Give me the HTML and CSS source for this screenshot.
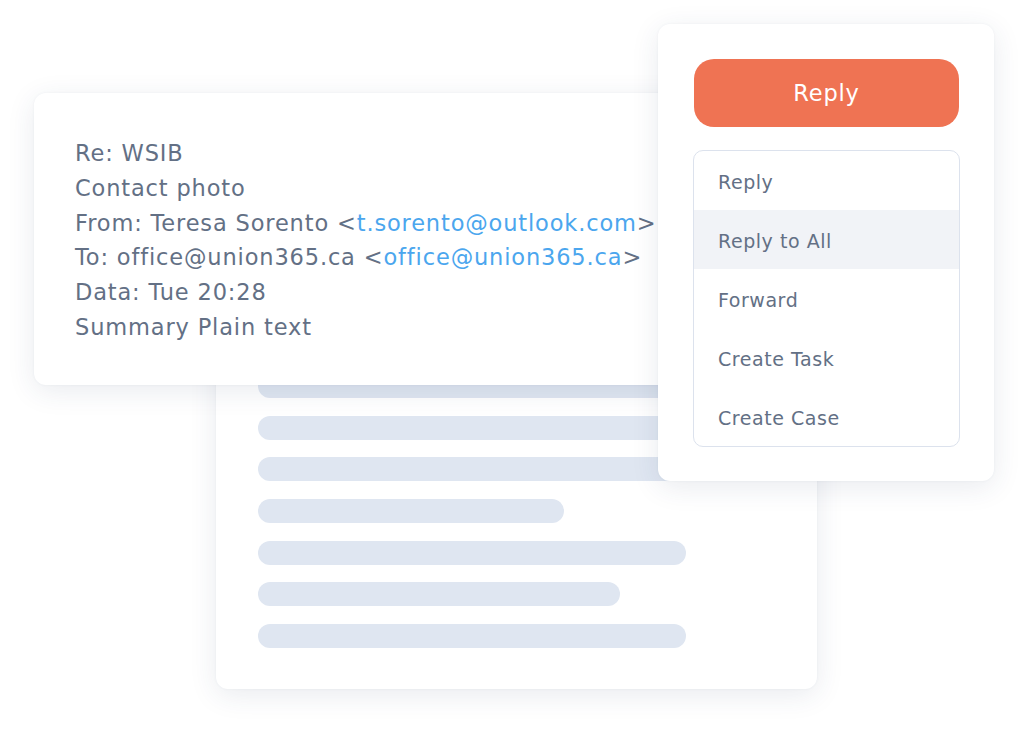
FILE: index.html
```html
<!DOCTYPE html>
<html>
<head>
<meta charset="utf-8">
<link rel="stylesheet" href="styles.css">
</head>
<body>
<div class="canvas">
  <div class="card body-card">
    <div class="bar w-long"></div>
    <div class="bar w-long"></div>
    <div class="bar w-long"></div>
    <div class="bar w-short"></div>
    <div class="bar w-long"></div>
    <div class="bar w-mid"></div>
    <div class="bar w-long"></div>
  </div>
  <div class="card email-card">
    <div class="line">Re: WSIB</div>
    <div class="line">Contact photo</div>
    <div class="line">From: Teresa Sorento &lt;<span class="link">t.sorento@outlook.com</span>&gt;</div>
    <div class="line">To: office@union365.ca &lt;<span class="link">office@union365.ca</span>&gt;</div>
    <div class="line">Data: Tue 20:28</div>
    <div class="line">Summary Plain text</div>
  </div>
  <div class="card menu-card">
    <button class="reply-btn">Reply</button>
    <ul class="menu">
      <li>Reply</li>
      <li class="active">Reply to All</li>
      <li>Forward</li>
      <li>Create Task</li>
      <li>Create Case</li>
    </ul>
  </div>
</div>
</body>
</html>
```
FILE: styles.css
```css
* { box-sizing: border-box; }
html, body { margin: 0; padding: 0; background: #ffffff; }
body { font-family: "DejaVu Sans", "Open Sans", sans-serif; color: #637085; }
.canvas { position: relative; width: 1024px; height: 730px; overflow: hidden; }
.card {
  position: absolute;
  background: #ffffff;
  border-radius: 12px;
  box-shadow: 0 6px 28px rgba(40, 60, 100, 0.10), 0 0 3px rgba(40, 60, 100, 0.05);
}
.body-card {
  left: 216px; top: 330px; width: 601px; height: 359px;
  padding: 44px 0 0 42px;
  display: flex; flex-direction: column; gap: 17.7px;
}
.bar { height: 24px; border-radius: 12px; background: #dfe6f1; flex: none; }
.w-long { width: 428px; }
.w-short { width: 306px; }
.w-mid { width: 362px; }
.email-card {
  left: 34px; top: 93px; width: 660px; height: 292px;
  padding: 43px 0 0 41px;
  font-size: 22.5px;
}
.line { line-height: 34.8px; white-space: nowrap; letter-spacing: 0.85px; }
.link { color: #4ba6ee; }
.menu-card {
  left: 658px; top: 24px; width: 336px; height: 457px;
  border-radius: 12px;
  padding: 35px 35px 0 35px;
}
.reply-btn {
  display: block; width: 265px; height: 68px; margin: 0 0 0 1px;
  border: none; border-radius: 20px; background: #ef7353;
  color: #ffffff; font-family: inherit; font-size: 22.5px; letter-spacing: 0.8px;
}
.menu {
  list-style: none; margin: 23px 0 0 0; padding: 0;
  width: 267px; border: 1.5px solid #dce2ed; border-radius: 10px; overflow: hidden;
}
.menu li { height: 59px; display: flex; align-items: center; padding-left: 24px; font-size: 19px; letter-spacing: 0.55px; padding-top: 2px; }
.menu li.active { background: #f1f3f7; }
```
